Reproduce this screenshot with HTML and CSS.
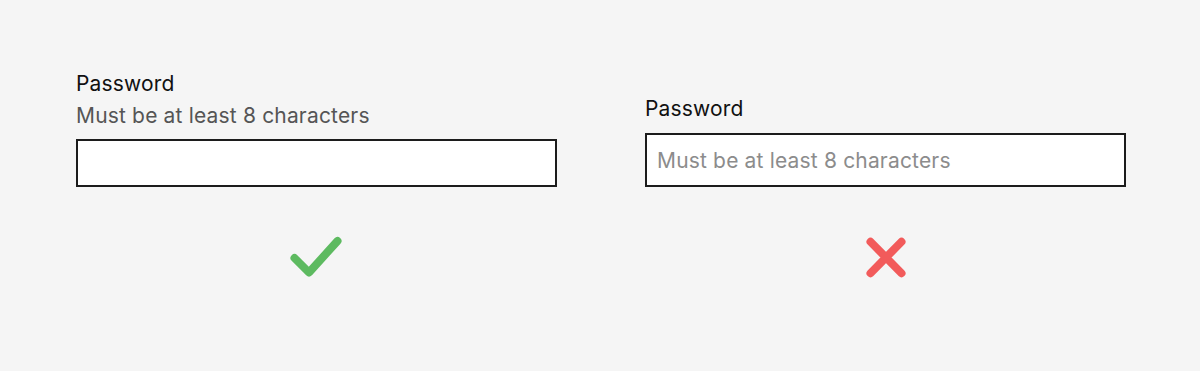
FILE: index.html
```html
<!DOCTYPE html>
<html lang="en">
<head>
<meta charset="utf-8">
<title>Password hint placement</title>
<link rel="stylesheet" href="styles.css">
</head>
<body>
<main class="page">
  <div class="columns">
    <section class="field">
      <label class="label" for="pw-good">Password</label>
      <p class="hint">Must be at least 8 characters</p>
      <input class="input input-good" id="pw-good" type="password">
    </section>
    <section class="field">
      <label class="label label-bad" for="pw-bad">Password</label>
      <input class="input input-bad" id="pw-bad" type="text" placeholder="Must be at least 8 characters">
    </section>
  </div>
  <div class="verdicts">
    <div class="verdict">
      <svg class="icon" viewBox="0 0 48 48" width="48" height="48" aria-label="Correct">
        <polyline points="1.5,24 16,38.5 44.5,7" fill="none" stroke="#5dba60" stroke-width="8" stroke-linecap="round" stroke-linejoin="round"/>
      </svg>
    </div>
    <div class="verdict">
      <svg class="icon" viewBox="0 0 48 48" width="48" height="48" aria-label="Incorrect">
        <path d="M8.5 7.75 L39.5 39.25 M39.5 7.75 L8.5 39.25" fill="none" stroke="#f25b5b" stroke-width="8" stroke-linecap="round"/>
      </svg>
    </div>
  </div>
</main>
</body>
</html>
```
FILE: styles.css
```css
html, body {
  margin: 0;
  padding: 0;
  background: #f5f5f5;
}

body {
  width: 1200px;
  height: 371px;
  overflow: hidden;
  font-family: Inter, "Liberation Sans", sans-serif;
  color: #111111;
}

.page {
  padding: 72px 0 0 76px;
}

.columns {
  display: flex;
  align-items: flex-end;
  gap: 88px;
}

.field {
  width: 481px;
  display: flex;
  flex-direction: column;
}

.label {
  font-size: 21px;
  line-height: 24px;
  letter-spacing: 0.17px;
  color: #111111;
  margin-bottom: 8px;
}

.label-bad {
  margin-bottom: 12px;
}

.hint {
  margin: 0 0 11px;
  font-size: 21px;
  line-height: 24px;
  letter-spacing: 0.17px;
  color: #555555;
}

.input {
  box-sizing: border-box;
  width: 481px;
  border: 2px solid #1c1c1c;
  background: #ffffff;
  border-radius: 0;
  outline: none;
  font-family: Inter, "Liberation Sans", sans-serif;
  font-size: 21px;
  line-height: 24px;
  letter-spacing: 0.17px;
  margin: 0;
}

.input-good {
  height: 48px;
  padding: 0 10px;
}

.input-bad {
  height: 54px;
  padding: 0 10px;
  color: #111111;
}

.input-bad::placeholder {
  color: #8c8c8c;
  opacity: 1;
}

.verdicts {
  display: flex;
  gap: 88px;
  margin-top: 47px;
}

.verdict {
  width: 481px;
  display: flex;
  justify-content: center;
}

.icon {
  display: block;
  overflow: visible;
}
```
